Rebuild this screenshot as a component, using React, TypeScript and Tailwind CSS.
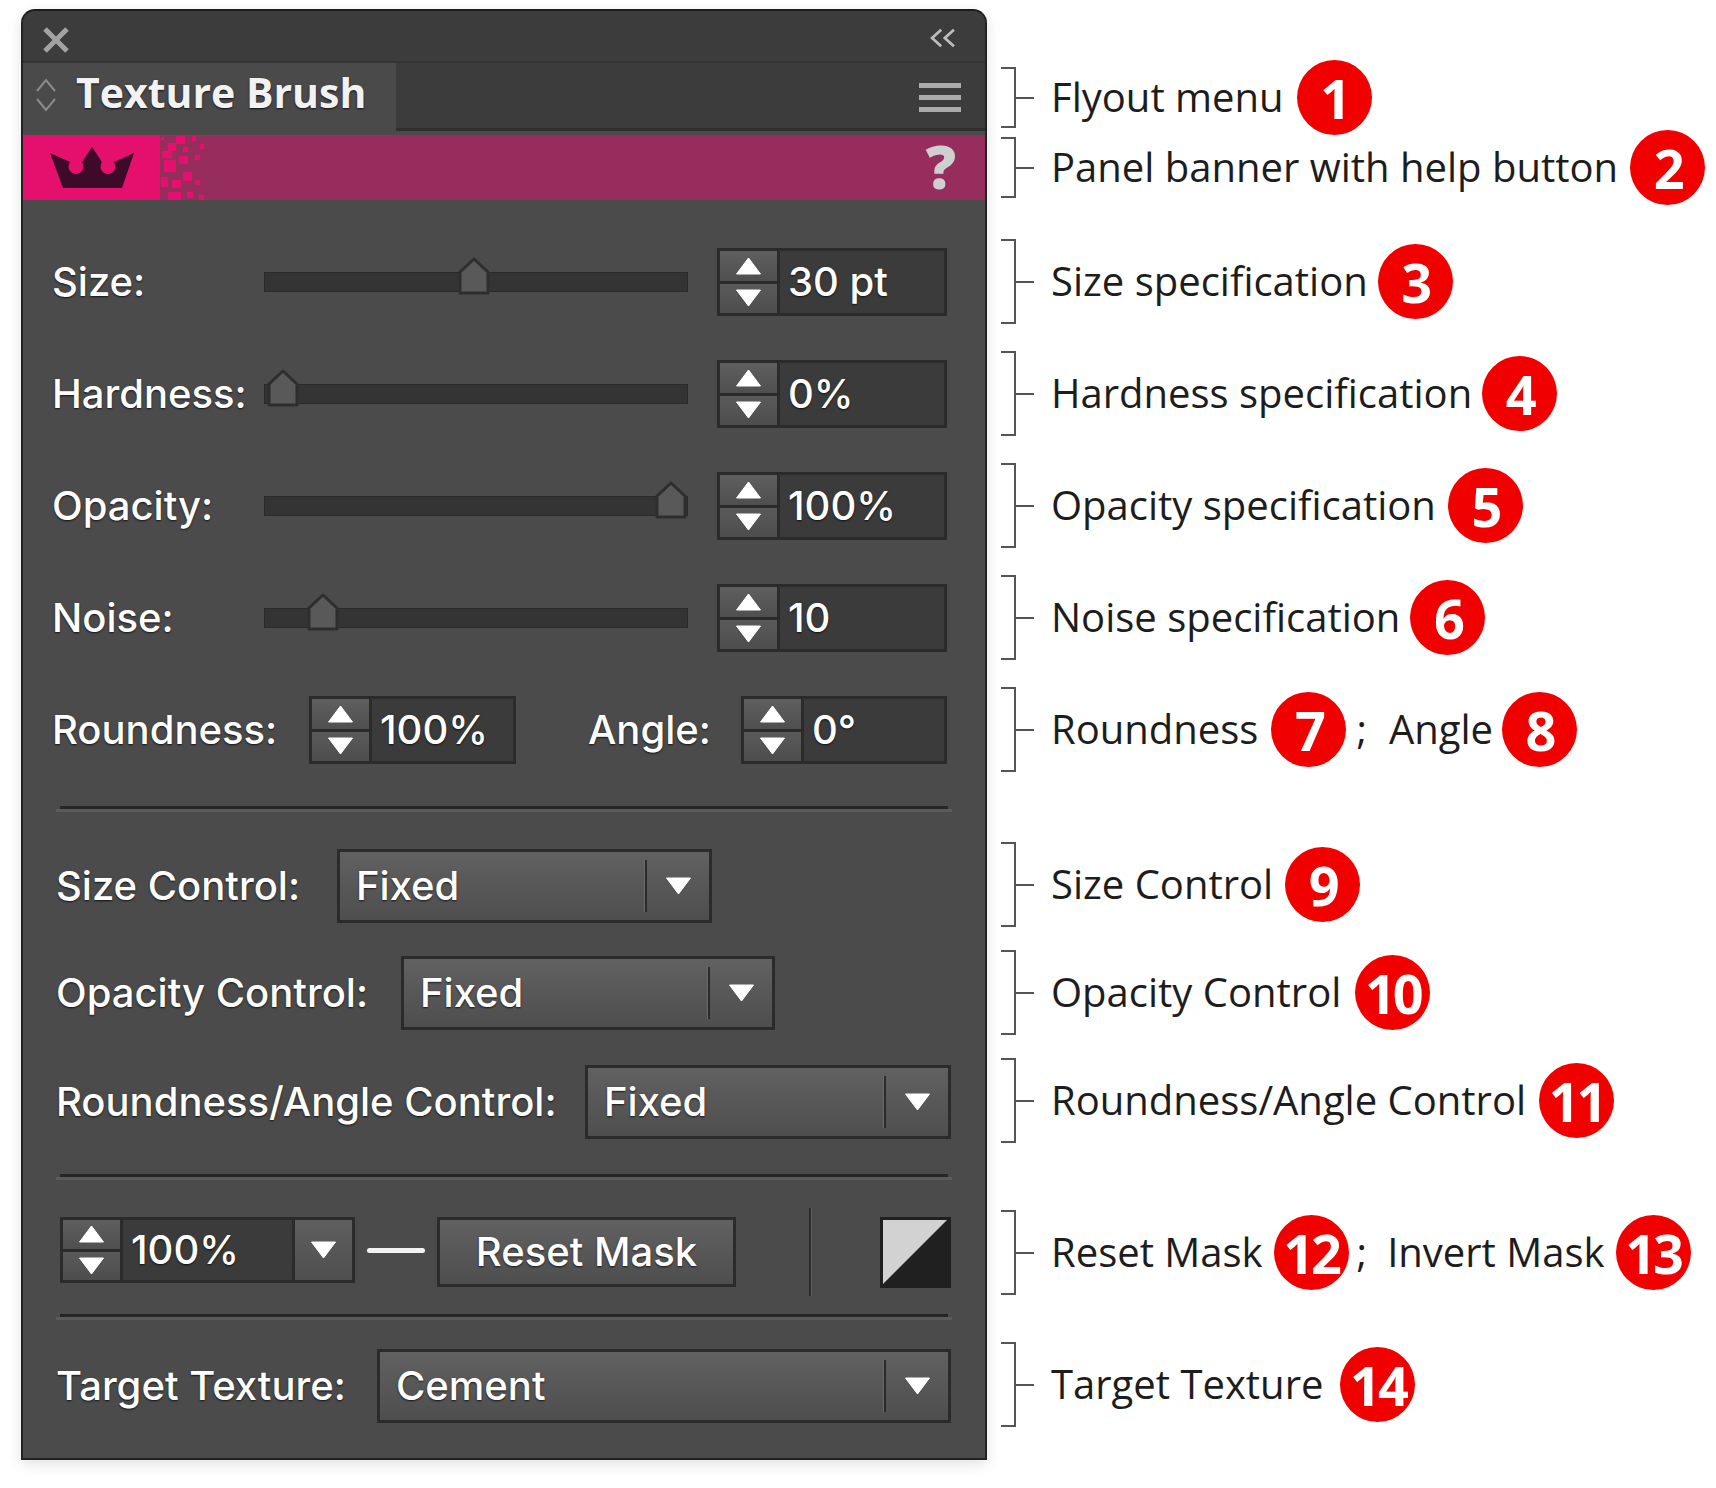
import React from 'react';

const uiFont = "font-['Inter','Liberation_Sans',sans-serif]";
const glow = '[text-shadow:0_1px_2px_rgba(0,0,0,0.75)]';

const Tri: React.FC<{ up?: boolean; className?: string }> = ({ up, className = 'w-[25px] h-[18px]' }) => (
  <svg viewBox="0 0 25 18" className={className}>
    <path d={up ? 'M12.5 1 L24.5 17 H0.5 Z' : 'M0.5 1 H24.5 L12.5 17 Z'} fill="#fff" stroke="#fff" strokeLinejoin="round" />
  </svg>
);

const Stepper: React.FC = () => (
  <div className="flex flex-col w-[57px] shrink-0 gap-[3px]">
    <div className="flex-1 flex items-center justify-center bg-gradient-to-b from-[#5f5f5f] to-[#4f4f4f]">
      <Tri up />
    </div>
    <div className="flex-1 flex items-center justify-center bg-gradient-to-b from-[#5a5a5a] to-[#4d4d4d]">
      <Tri />
    </div>
  </div>
);

const Spinner: React.FC<{ value: string; className: string; dropdown?: boolean }> = ({ value, className, dropdown }) => (
  <div className={`flex shrink-0 bg-[#2b2b2b] p-[3px] ${className}`}>
    <Stepper />
    <div className={`flex-1 ml-[3px] bg-[#3b3b3b] flex items-center pl-[8px] text-[40px] font-medium leading-none text-white ${glow}`}>
      {value}
    </div>
    {dropdown && (
      <div className="w-[57px] ml-[3px] flex items-center justify-center bg-gradient-to-b from-[#5f5f5f] to-[#4f4f4f]">
        <Tri />
      </div>
    )}
  </div>
);

const Label: React.FC<{ children: React.ReactNode; className?: string }> = ({ children, className = '' }) => (
  <span className={`text-[40px] font-medium leading-none text-white whitespace-nowrap ${glow} ${className}`}>{children}</span>
);

const SliderRow: React.FC<{ label: string; value: string; thumb: number; className?: string }> = ({ label, value, thumb, className = '' }) => (
  <div className={`flex items-center h-[68px] pl-[29px] ${className}`}>
    <Label className="w-[212px] shrink-0">{label}</Label>
    <div className="relative w-[424px] h-[20px] bg-[#343434] border border-[#2a2a2a] shrink-0">
      <svg viewBox="0 0 32 38" className="absolute top-[-16px] w-[32px] h-[38px]" style={{ left: thumb }}>
        <path d="M2 15 L16 2 L30 15 V36 H2 Z" fill="#595959" stroke="#2e2e2e" strokeWidth="3" strokeLinejoin="round" />
      </svg>
    </div>
    <Spinner value={value} className="h-[68px] w-[230px] ml-[29px]" />
  </div>
);

const Select: React.FC<{ value: string; className: string }> = ({ value, className }) => (
  <div className={`h-[74px] border-[3px] border-[#2b2b2b] bg-gradient-to-b from-[#616161] to-[#4e4e4e] flex items-center pl-[16px] shrink-0 ${className}`}>
    <span className={`flex-1 text-[40px] font-medium leading-none text-white ${glow}`}>{value}</span>
    <div className="w-[3px] h-[52px] bg-[#2a2a2a] border-l border-[#6a6a6a]" />
    <div className="w-[62px] flex justify-center">
      <Tri />
    </div>
  </div>
);

const ControlRow: React.FC<{ label: string; value: string; labelW: string; selectW: string; className: string }> = ({ label, value, labelW, selectW, className }) => (
  <div className={`flex items-center pl-[33px] ${className}`}>
    <Label className={`shrink-0 ${labelW}`}>{label}</Label>
    <Select value={value} className={selectW} />
  </div>
);

const Divider: React.FC<{ className: string }> = ({ className }) => (
  <div className={`mx-[33px] ${className}`}>
    <div className="h-[3px] ml-[4px] mr-[4px] bg-[#262626]" />
    <div className="h-[3px] bg-[#5a5a5a]" />
  </div>
);

const ditherSquares = [
  [8, 8, 8, 8], [16, 1, 9, 8], [32, 1, 4, 5], [40, 9, 4, 5], [23, 12, 5, 5], [35, 20, 5, 5], [19, 21, 9, 8],
  [4, 25, 12, 12], [23, 37, 9, 9], [35, 45, 5, 5], [12, 45, 9, 8], [1, 42, 7, 10], [8, 57, 13, 8], [27, 57, 6, 6],
  [39, 60, 5, 5], [1, 2, 3, 3], [2, 16, 10, 7],
];

const Banner: React.FC = () => (
  <div className="h-[65px] mt-[4px] flex bg-[#962d5c]">
    <div className="w-[137px] bg-[#e5106e] flex items-center pl-[27px]">
      <svg viewBox="0 0 84 42" className="w-[84px] h-[42px]">
        <path d="M0 6 L20 15 A7.5 7.5 0 1 0 32 15 L42 0 L52 15 A7.5 7.5 0 1 0 64 15 L84 6 L72 41 L13 41 Z" fill="#3d0a2a" />
      </svg>
    </div>
    <svg viewBox="0 0 45 65" className="w-[45px] h-[65px]">
      {ditherSquares.map(([x, y, w, h], i) => (
        <rect key={i} x={x} y={y} width={w} height={h} fill="#e5106e" />
      ))}
    </svg>
    <span className="ml-auto mr-[29px] mb-[3px] self-center text-[60px] leading-none font-extrabold text-[#cfcfcf] font-['Open_Sans',sans-serif]">?</span>
  </div>
);

const Panel: React.FC = () => (
  <div className={`w-[966px] h-[1451px] mt-[9px] ml-[21px] shrink-0 rounded-t-[14px] border-2 border-[#222] border-t-[#1c1c1c] bg-[#4b4b4b] overflow-hidden shadow-[0_4px_14px_rgba(0,0,0,0.12)] ${uiFont}`}>
    <div className="h-[52px] bg-[#3c3c3c] border-b-2 border-[#343434] flex items-center justify-between pl-[19px] pr-[27px]">
      <svg viewBox="0 0 28 28" className="w-[28px] h-[28px] mt-[8px]">
        <path d="M3 3 L25 25 M25 3 L3 25" stroke="#a3a3a3" strokeWidth="5" />
      </svg>
      <svg viewBox="0 0 30 22" className="w-[30px] h-[20px] mt-[3px]">
        <path d="M13 2 L3 11 L13 20 M27 2 L17 11 L27 20" fill="none" stroke="#bdbdbd" strokeWidth="3" />
      </svg>
    </div>
    <div className="h-[68px] bg-[#3c3c3c] flex items-stretch">
      <div className="w-[373px] bg-[#4a4a4a] flex items-center pl-[12px]">
        <svg viewBox="0 0 22 34" className="w-[22px] h-[34px] mb-[4px]">
          <path d="M2 13 L11 2 L20 13 M2 21 L11 32 L20 21" fill="none" stroke="#8b8b8b" strokeWidth="2" />
        </svg>
        <span className="ml-[19px] mb-[10px] text-[41px] leading-none font-bold text-[#f2f2f2] font-['Open_Sans',sans-serif] [text-shadow:0_1px_2px_rgba(0,0,0,0.8)]">Texture Brush</span>
      </div>
      <div className="flex-1 flex justify-end items-center pr-[24px] border-b-[3px] border-[#2f2f2f]">
        <div className="flex flex-col gap-[7px] w-[42px] mt-[3px]">
          <div className="h-[5px] bg-[#ababab]" />
          <div className="h-[5px] bg-[#ababab]" />
          <div className="h-[5px] bg-[#ababab]" />
        </div>
      </div>
    </div>
    <Banner />

    <SliderRow label="Size:" value="30 pt" thumb={193} className="mt-[48px]" />
    <SliderRow label="Hardness:" value="0%" thumb={2} className="mt-[44px]" />
    <SliderRow label="Opacity:" value="100%" thumb={390} className="mt-[44px]" />
    <SliderRow label="Noise:" value="10" thumb={42} className="mt-[44px]" />

    <div className="flex items-center h-[68px] pl-[29px] mt-[44px]">
      <Label className="w-[257px] shrink-0">Roundness:</Label>
      <Spinner value="100%" className="h-[68px] w-[207px]" />
      <Label className="ml-[72px] w-[153px] shrink-0">Angle:</Label>
      <Spinner value="0°" className="h-[68px] w-[206px]" />
    </div>

    <Divider className="mt-[42px]" />
    <ControlRow label="Size Control:" value="Fixed" labelW="w-[281px]" selectW="w-[375px]" className="mt-[37px]" />
    <ControlRow label="Opacity Control:" value="Fixed" labelW="w-[345px]" selectW="w-[374px]" className="mt-[33px]" />
    <ControlRow label="Roundness/Angle Control:" value="Fixed" labelW="w-[529px]" selectW="w-[366px]" className="mt-[35px]" />

    <Divider className="mt-[35px]" />
    <div className="flex items-start h-[70px] pl-[37px] mt-[37px]">
      <Spinner value="100%" className="h-[66px] w-[295px]" dropdown />
      <div className="w-[58px] h-[5px] rounded-full bg-[#f2f2f2] ml-[12px] mt-[31px] shrink-0" />
      <div className={`w-[299px] h-[70px] ml-[12px] shrink-0 border-[3px] border-[#2b2b2b] bg-gradient-to-b from-[#616161] to-[#4e4e4e] flex items-center justify-center text-[40px] font-medium leading-none text-white ${glow}`}>
        Reset Mask
      </div>
      <div className="w-[3px] h-[88px] ml-[73px] -mt-[9px] bg-[#2d2d2d] border-r border-[#5c5c5c] shrink-0" />
      <div className="w-[71px] h-[71px] ml-[68px] shrink-0">
        <svg viewBox="0 0 71 71" className="w-[71px] h-[71px]">
          <rect width="71" height="71" fill="#202020" />
          <path d="M3 3 H67 L3 67 Z" fill="#d2d2d2" />
        </svg>
      </div>
    </div>
    <Divider className="mt-[27px]" />
    <ControlRow label="Target Texture:" value="Cement" labelW="w-[321px]" selectW="w-[574px]" className="mt-[29px]" />
  </div>
);

const Badge: React.FC<{ n: number; className: string }> = ({ n, className }) => (
  <span className={`w-[75px] h-[75px] shrink-0 rounded-full bg-[#f10000] flex items-center justify-center text-white font-bold text-[54px] leading-none tracking-[-3px] ${className}`}>
    {n}
  </span>
);

const Txt: React.FC<{ children: React.ReactNode; className?: string }> = ({ children, className = '' }) => (
  <span className={`-translate-y-[1px] ${className}`}>{children}</span>
);

const Note: React.FC<{ className: string; h: string; children: React.ReactNode }> = ({ className, h, children }) => (
  <div className={`flex items-center whitespace-nowrap ${h} ${className}`}>
    <div className="w-[15px] shrink-0 border-t-2 border-b-2 border-r-2 border-[#555] h-full" />
    <div className="w-[18px] h-[2px] bg-[#555] shrink-0" />
    <div className="ml-[17px] flex items-center">{children}</div>
  </div>
);

const Annotations: React.FC = () => (
  <div className="ml-[14px] flex flex-col font-['Open_Sans',sans-serif] text-[40px] leading-none text-[#1d1d1d]">
    <Note h="h-[61px]" className="mt-[67px]"><Txt>Flyout menu</Txt><Badge n={1} className="ml-[13px]" /></Note>
    <Note h="h-[61px]" className="mt-[9px]"><Txt>Panel banner with help button</Txt><Badge n={2} className="ml-[12px]" /></Note>
    <Note h="h-[85px]" className="mt-[41px]"><Txt>Size specification</Txt><Badge n={3} className="ml-[10px]" /></Note>
    <Note h="h-[85px]" className="mt-[27px]"><Txt>Hardness specification</Txt><Badge n={4} className="ml-[10px]" /></Note>
    <Note h="h-[85px]" className="mt-[27px]"><Txt>Opacity specification</Txt><Badge n={5} className="ml-[12px]" /></Note>
    <Note h="h-[85px]" className="mt-[27px]"><Txt>Noise specification</Txt><Badge n={6} className="ml-[10px]" /></Note>
    <Note h="h-[85px]" className="mt-[27px]">
      <Txt>Roundness</Txt><Badge n={7} className="ml-[13px]" />
      <Txt className="ml-[10px]">;</Txt><Txt className="ml-[22px]">Angle</Txt><Badge n={8} className="ml-[9px]" />
    </Note>
    <Note h="h-[85px]" className="mt-[70px]"><Txt>Size Control</Txt><Badge n={9} className="ml-[12px]" /></Note>
    <Note h="h-[85px]" className="mt-[23px]"><Txt>Opacity Control</Txt><Badge n={10} className="ml-[14px]" /></Note>
    <Note h="h-[85px]" className="mt-[23px]"><Txt>Roundness/Angle Control</Txt><Badge n={11} className="ml-[13px]" /></Note>
    <Note h="h-[85px]" className="mt-[67px]">
      <Txt>Reset Mask</Txt><Badge n={12} className="ml-[11px]" />
      <Txt className="ml-[8px]">;</Txt><Txt className="ml-[20px]">Invert Mask</Txt><Badge n={13} className="ml-[11px]" />
    </Note>
    <Note h="h-[85px]" className="mt-[47px]"><Txt>Target Texture</Txt><Badge n={14} className="ml-[17px]" /></Note>
  </div>
);

export default function App() {
  return (
    <div className="w-[1716px] h-[1488px] bg-white flex items-start overflow-hidden">
      <Panel />
      <Annotations />
    </div>
  );
}
